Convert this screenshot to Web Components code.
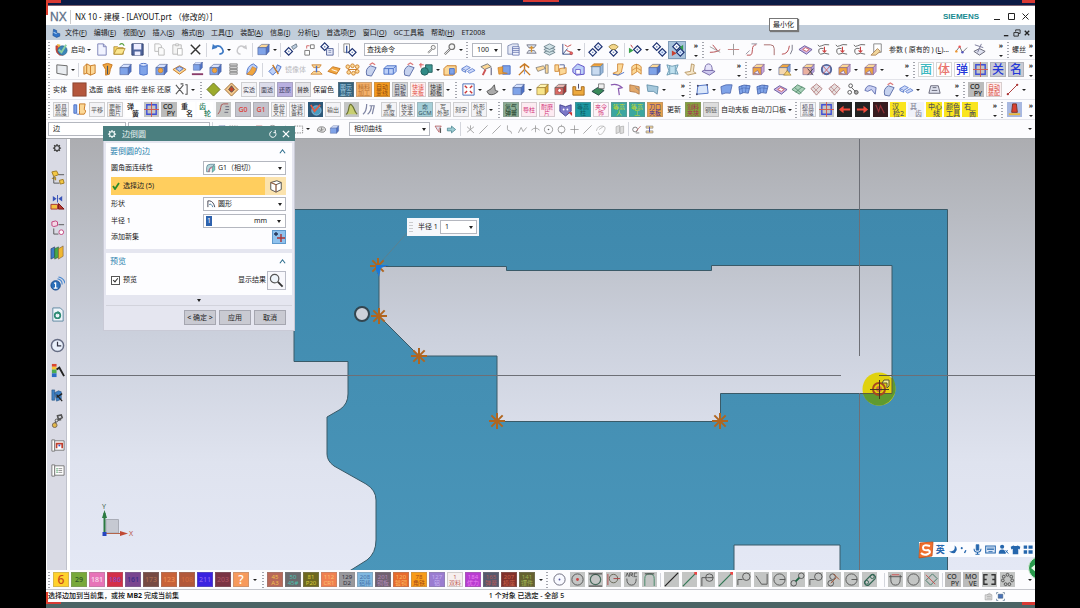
<!DOCTYPE html>
<html lang="zh-CN">
<head>
<meta charset="utf-8">
<title>NX 10 - 建模</title>
<style>
html,body{margin:0;height:100%;background:#000;overflow:hidden}
body{font:7px/10px "Noto Sans","Noto Sans CJK SC",sans-serif;color:#222;padding:0 45px 0 46px;box-sizing:border-box}
</style>
</head>
<body>
<nx-app></nx-app>
<script>
/* ---------- icon library, 16 x 16 grid ---------- */
const P=(d,f='none',s='#555',w=1)=>`<path d="${d}" fill="${f}" stroke="${s}" stroke-width="${w}"/>`;
const C=(x,y,r,f='none',s='#555',w=1)=>`<circle cx="${x}" cy="${y}" r="${r}" fill="${f}" stroke="${s}" stroke-width="${w}"/>`;
const cube=(a,b,c,s='#4a5c94')=>P('M2 6l4-3.500h8l-3 3.500z',a,s,.6)+P('M2 6h9v7.500H2z',b,s,.6)+P('M11 6l3-3.500v7.500l-3 3.500z',c,s,.6);
const sheet=(a,s='#55659a')=>P('M2 5q5-3 12-1l-2 8q-5-2-9 1z',a,s,.8)+P('M5 4l1 8M10 3l-1 8M2 8q5-3 11-1','none',s,.5);
const gem=(x,y,f='#fff')=>P(`M${x} ${y-4}l4 4-4 4-4-4z`,f,'#1d3272',1.3)+C(x,y,1,'#7c93c6','none');
const G='<rect width="16" height="16" fill="#c3c5c4"/>';
const B='#7fa3e8',BL='#bcd0f8',BD='#4d72c8',O='#f0a640',OL='#fcd897',OD='#c87a24';
const ICON={
launch:P('M2 4h4l-1 4 5 6-4 0q-4-2-4-6z','#d84a3a','#8a3030',.5)+C(9,9,5,'#3b86b8','#205a80',.6)+P('M5 8l3 3 5-8','none','#8ed0a0',2)+P('M3 2l4 1-2 3z','#f0b53c','none'),
new:P('M4 2h6l3 3v9H4z','#f1f3ff','#7d83b8')+P('M10 2v3h3','none','#7d83b8'),
open:P('M2 13V5h4l1 1h5v7z','#f7d566','#a8842c',.8)+P('M2 13l3-6h9l-3 6z','#fbe68f','#a8842c',.8)+P('M8 3q3-3 5 1','none','#58a040',1.2),
save:P('M2 2h12v12H2z','#50659c','#32426e')+'<path fill="#eef" d="M4 2h8v6H4zM5 10h6v4H5z"/>',
copy:P('M3 2h5l2 2v6H3z','#fafafa','#bbb')+P('M7 6h4l2 2v6H7z','#fafafa','#bbb'),
paste:P('M3 3h9v10H3z','#f4f4f4','#bbb')+P('M6 2h3v2H6zM8 7h5v7H8z','#fff','#bbb'),
cut:P('M3 3l10 10M13 3L3 13','none','#333',1.5),
undo:P('M3 6q7-4 10 1t-3 6','none','#3d79c4',1.8)+P('M2 8l1-6 5 4z','#3d79c4','none'),
redo:P('M13 6Q6 2 4 7t3 6','none','#c9c9cc',1.5)+P('M14 8l-1-5-4 3z','#c9c9cc','none'),
cubeo:cube(OL,B,BD),
cubeb:cube('#d6e2ff',B,BD),
cubehole:cube('#d6e2ff',B,BD)+C(7,9,2.500,O,OD,.6),
cubetop:cube(O,'#f5d8b0',B)+P('M7 14l4-5 4 5z','#f7d070','#8a6a20',.6),
cubey:cube('#fff4b0','#f8e58a','#e0a93a','#8a6a20'),
cubered:cube('#e8b6b0','#d86a64','#a83434','#555')+C(7,9,2,'#fff','#a33',.8),
cubepink:cube(OL,O,'#c9a6d8','#7a5a90')+P('M3 12l4-3 2 4z','#eef','#7a5a90',.7),
cubex:cube(OL,'#eab0a0','#b9a3e0','#6a5a90')+P('M7 7l6 7M13 7l-6 7','none','#444'),
link:gem(5,10)+P('M8 5l5-3 1 3-4 3z','#bcd','#567',.8),
rects:P('M3 9h5v5H3zM9 3h4v4H9z','#fff','#777')+P('M5 7V4h3','none','#c55',.9),
gemdoc:gem(5,5)+P('M7 7h7v7H7z','#e8ecfa','#55659a')+P('M9 9h3M9 11h3','none','#55659a',.7),
move:P('M2 2h6v9H2z','#fff','#888')+P('M5 4v8','none','#35529c',1.4)+gem(11,11),
wrench:C(10.500,5,3,'#f4f4f4','#777',1.300)+P('M8 8l-5 5','none','#777',2.400)+P('M8 8l-5 5','none','#eee',1),
layers1:P('M2 4l5-2h6v9l-5 2H2z','#e4e8f6','#6a78a4',.8)+P('M7 5h7v9H7zM7 7h7M7 9h7M7 11h7','#f4f6ff','#5a6aa8',.8),
layers2:P('M3 3h10l-2 3H5zM3 12h10l-2-3H5z','#d8e0ea','#667',.8)+P('M8 5v6M6 7l2-2 2 2','none','#d89330',1.3),
layers3:[11,8,5].map(y=>P(`M2 ${y}l6-3 6 3-6 3z`,'#cfe0e4','#58707c',.8)).join(''),
csys:P('M3 2v11h10M3 13l5-6','none','#3a4f86',1)+P('M5 3l3 2 4-2M7 9l5 2','none','#c44a4a',1)+C(12,12,1.500,'#e66','#933',.5),
gems:gem(5,11)+gem(11,5,'#e8eefc'),
key:gem(8,11)+P('M3 5q5-5 10 0l-3 3H6z','#f4d78a','#8a7430',.8),
play:P('M1 6l5 3-5 3z','#3aa34a','none')+P('M3 3l2 3','none','#b33')+gem(10,8),
gem2:gem(5,5)+gem(11,11,'#dbe9ff'),
gem3:gem(7,5)+P('M14 3v6l-4-3z','#2f9a4a','none')+P('M2 9l5 3-5 3z','#c84030','none')+gem(11,11,'#cfe4ff'),
trim:P('M2 11q8 0 11-3M5 3l5 6','none','#b5484c',1)+P('M2 5l11 6','none','#888',.8),
cross:P('M2 8h12','none','#c78080')+P('M8 2v12','none','#999'),
scurve:P('M3 14h4q2-1 2-6t4-5','none','#b5484c')+P('M8 2h6M2 13l4-4','none','#778',.8),
corner:P('M2 3h7q4 0 4 4v7','none','#a66a6a',1),
hook:P('M2 13q7 0 8-9','none','#b5484c')+P('M13 3q1 6-2 10','none','#778'),
patch:P('M1 8l6-4 8 4-6 5z','#cdb8e6','#5b4c94',.9)+P('M5 8l3-2 4 2-3 2z','#fff','#c44',.8),
swirl:P('M14 3Q9 2 6 4T2 3M14 13q-5-2-9 0-3-1-2-5 2-2 5-1','none','#666')+P('M9 5v6M7 9l2 2 2-2','none','#c44',1.2),
edit:P('M4 2h8v9H4z','#fff','#888')+P('M1 14l7-7 3 3-5 4z','#f1d69c','#a07040',.8),
pts:P('M2 10l4-5 3 6 5-5','none','#777')+C(6,5,1.300,'#e55','none')+C(9,11,1.300,'#55b','none')+C(2.500,10,1.300,'#e93','none'),
plane2:P('M2 10l6-3 6 3-6 4z','#dfe2f0','#667')+P('M3 3l9 3M10 2L6 11','none','#779'),
plane:P('M3 3l11 1v10L3 12z','#e9ecf0','#666'),
wrap:P('M2 5l3-3 4 2 5-1v9l-5 2-4-2-3 1z',OL,OD)+P('M5 2v10M9 4v10','none',OD),
rev:P('M3 3q5-3 10 0l-2 5-1 5-4 1V8z',O,OD)+P('M8 4v9','none','#456',1.2),
cyl:P('M4 3v10q4 2 8 0V3',B,BD)+`<ellipse cx="8" cy="3" rx="4" ry="1.500" fill="#dce7ff" stroke="#4d72c8"/>`,
pad:P('M1 8l7-4 7 4-7 5z',OL,OD)+P('M4 7l4-2 4 2-4 3z',BL,BD),
cubelab:'<g transform="translate(2 -2) scale(.8)">'+cube('#d6e2ff',B,BD)+'</g>'+P('M2 13h12','none','#8a3d6a',2),
thread:[2,5,8,11].map(y=>P(`M4 ${y}h8v2H4z`,'#ddd','#777',.8)).join(''),
blend:P('M3 13q0-9 7-11l4 3q-1 7-5 9z',BL,BD)+P('M3 13q4-3 6-8l4 2q-1 4-4 7z',O,OD,.6),
mirror:P('M1 10l5-5 3 5-4 4zM10 3l4 2-3 6-3-3z',BL,BD)+P('M5 3l6 10','none',OD,1.5),
offset:P('M3 3h10l-2 3H5zM2 13h12l-3-3H5z',OL,OD,.8)+P('M8 4v7','none',BD,1.5),
dots:[[3,5],[8,4],[13,5],[4,11],[9,12],[13,10]].map(p=>C(p[0],p[1],2,OL,OD,.9)).join('')+P('M3 8h10','none',OD),
sew:P('M1 10l5-5 8 2-4 6z',O,OD)+P('M5 8l6 2','none','#fff'),
bend:P('M4 14q-2-7 4-10l6 2-5 9z','#c6d2ee','#5d6ea8')+P('M7 3l3-2 3 2','none','#d77',1.2),
twocube:P('M1 7l3-3h10v6l-3 3H1z',BL,BD)+P('M1 7h10l3-3M11 7v6M6 7v6','none',BD),
unite:P('M7 3h7v8H7z','#3f9894','#26605e')+C(6,10,4,'#2f8a86','#26605e')+P('M2 1v5M0 3h5','none','#d55'),
mixcube:P('M1 7l3-3h10v7l-3 3H1z',OL,OD)+P('M7 7h5v6H7z',B,BD),
slab:P('M1 7l5-3 4 2-5 3zM7 10l5-3 3 2-6 3z','#cdd9fa',BD,.8)+P('M1 7v2l4 2V9','none',BD),
brush:P('M2 5l7-3 4 3-7 3z',OL,'#777')+P('M7 8l-3 6','none','#c55',2)+P('M13 6v8','none','#446',1),
arrowcube:P('M6 4h8v9H6z',B,BD)+P('M1 6l5-1v6l5 1-9 1z',O,OD,.7),
tri:P('M8 2v7M2 14l6-6 6 6M3 6l5-4 5 4','none',OD,1.5)+P('M8 8v5','none',B),
flag:P('M1 6l8-2 2 3-8 3zM11 3h3v9h-3z',OL,'#777',.8),
fold:P('M2 3h4v7H2zM7 7l7-1v6l-7 2z',OL,OD,.8)+P('M7 3h5v4','none','#55659a'),
shell:P('M2 7l5-5 7 3v8l-8 1-4-3z',BL,'#5b4cc4')+P('M5 8h5v5H5z','#fff','#5b4cc4',.8),
box:P('M2 5l3-3h10l-3 3z',O,OD)+P('M3 5h9v9H3z','#c9dbf0','#68a')+P('M12 5l3-3v9l-3 3z','#9ab8dc','#68a',.8),
sheet1:P('M2 12l5-2V2h6l-2 9-4 3z',OL,OD,.8)+P('M2 13l6 1 6-3','none',BD),
sheet2:P('M3 14V5q5-5 10 0v8l-4-3z',OL,OD,.8)+P('M8 2v8M3 9l5-3 5 3','none',OD,.7),
sheet3:P('M2 3q5 3 12 0l-2 5 2 5q-7-2-12 1l2-5z','#bfe0ee','#5488a4',.8)+P('M5 4v9M11 4v9','none','#5488a4',.7),
lshape:P('M9 2l3 1-1 7 3 2-9 2-3-3 6-1z','#f6e6c8','#a8844c',.8),
dome:P('M1 10l6-3 8 3-6 4z','#cdc8ee','#5b4c94',.8)+P('M4 9q0-7 4-7t4 7z','#e5e2fa','#5b4c94',.8),
gearx:C(8,8,5,'#cdd9fa','#55659a',2)+P('M4 4l8 9M12 4l-8 9','none','#c66',1),
face:P('M2 5q5-3 12-2l-2 9q-5-1-9 1z',B,'#4a62a8',.8),
mesh:sheet(B,'#3c5aa4'),meshg:P('M1 8l6-5 8 4-6 6z','#a8d0b8','#3d7a5a',.8)+P('M4 6l7 6M5 11l7-6','none','#3d7a5a',.7),
meshr:P('M2 7l6-5 6 5-6 7z','#e6dede','#a86a6a',.8)+P('M4 5l7 7M5 11l7-7','none','#a86a6a',.6),
quad:P('M3 4l10-1 1 9-12 1z','#dbe7fa','#4d72c8')+C(3,4,1,'#446','none')+C(13,3,1,'#446','none')+C(2,13,1,'#446','none'),
ribbon:P('M2 9q2-6 6-5t6 2l-1 7-4-5-4 2z','#c8cff2','#5666a8',.9),
circs:C(6,4,2)+C(5,11,2)+C(12,11,2,'#aaa')+P('M7 6l4 4','none','#555'),
car:P('M2 12l2-8h8l2 8z','#dfe2ee','#667')+P('M5 9h6M6 6h4','none','#667'),
redsq:'<rect x="1" y="1" width="14" height="14" fill="#b4563c" stroke="#8a4430"/>',
xyz:P('M2 3l8 10M10 3L2 13M12 3h2v10h-2M7 2h3','none','#555',1.1),
dia1:P('M8 1l7 7-7 7-7-7z','#9cab2c','#6a7420'),
dia2:P('M8 1l7 7-7 7-7-7z','#f4c88c','#9a6a30')+P('M8 4l3 4-3 3-3-3z','#c0482c','#555',1),
fit:P('M2 2h12v12H2z','#fff','#4a6cb4')+P('M4 4l2.500 2.500M12 4L9.500 6.500M4 12l2.500-2.500M12 12L9.500 9.500','none','#c33',1.5),
shade:P('M2 10q5-2 8-7l1 6 3 1q-5 5-10 3z','#aaa','#555'),
tray:P('M2 5h3v4h6V5h3v9H2z','#eda93e','#a56a1c')+P('M8 2v5','none','#446',1),
gcube:P('M1 10l6-4 7 3-6 5z','#3a8a5a','#244')+P('M8 2h6v5H8z','#eee','#555',.7),
stick:P('M2 3q7-2 12 3l-4 1 1 7','none','#8a5ab0',1.300),
tag:P('M3 3l10 2v8l-4-2-6-1z','#e3a86a','#a87040',.8)+P('M9 6l4 3','none','#888'),
tagb:P('M2 3l12 2-1 8-4-3-6 0z','#a5c8dc','#5685a0',.8),
line:P('M3 13L13 3','none','#a33')+C(3,13,1.200,'#a33','none')+C(13,3,1.200,'#a33','none'),
pin:P('M2 3h3v9H2zM5 13h3',B,BD)+P('M8 2h6l-1 6q3 1 0 5H8V9z',OL,OD),
target:G+P('M3 3h10v10H3z','none','#4050d8',1.5)+P('M8 0v16M0 8h16','none','#d05a50',1),
arcs:G+P('M2 13q3-3 3-7t3-4h5','none','#a55')+P('M10 5h4M10 8h4M9 11h4','none','#667'),
globe:'<rect width="16" height="16" fill="#2d5878"/>'+C(9,9,5,'#4a9cc0','#ace',.7)+P('M3 3l4 7 6-7','none','#e85a40',1.8),
wave:G+P('M2 13q2 0 3-6t3-4 3 5 3 5','#c8cf70','#687030',1.2),
force:P('M5 2q0 8-4 11M8 4h5l-2 9M10 4q0 6-4 9','none','#8086a4',1.300),
mask:P('M2 3l6 2 6-2v7l-6 5-6-5z','#7b78c8','#484590')+C(6,8,1,'#fff','none')+C(10,8,1,'#fff','none')+P('M11 11h4v4z','#c33','none'),
left:'<rect width="16" height="16" fill="#222"/>'+P('M2 8l5-4v3h7v2H7v3z','#f34a3a','none'),
right:'<rect width="16" height="16" fill="#222"/>'+P('M14 8L9 4v3H2v2h7v3z','#f34a3a','none'),
darkred:'<rect width="16" height="16" fill="#381c20"/>'+P('M3 3l3 7 2-6 4 8','none','#983038',1.2),
stamp:'<rect width="16" height="16" fill="#a8b8e0"/>'+P('M6 2h4l1 9H5z','#d84030','#803020')+P('M2 12h12v2H2z','#e8b83c','none'),
dash:'<rect x="2" y="3" width="12" height="10" fill="none" stroke="#555" stroke-dasharray="2 1.500"/>',
cloud:P('M2 10q0-6 6-6t6 5q-2 4-6 3t-6-2z','#ddd','#666')+P('M5 8l3 2 3-3M8 5v4','none','#666'),
filt:P('M3 3h9l-3 4v5l-3-4z','#dfe3f0','#a44')+P('M11 6v7','none','#444',1.4),
arr:P('M2 6h6V3l6 5-6 5v-3H2z','#9ccbd2','#3d7c88'),
sn1:P('M3 4l10 9M3 12l10-8M8 2v5','none','#888'),sn2:P('M2 14L14 2','none','#888'),
sn3:P('M5 2v5q0 3 3 3t3 4','none','#888'),sn4:P('M2 13l4-8 3 6 5-6','none','#888'),
sn5:P('M2 9q6-6 12 0M8 2v10','none','#888'),sn6:C(8,8,6,'none','#777')+C(8,8,1.200,'#666','none'),
sn7:C(8,8,5,'none','#777')+P('M8 1v3M8 12v3','none','#999'),sn8:P('M8 2v12M2 8h12','none','#888'),
sn9:P('M2 10q2-8 9-7t1 9-7 0M6 8l7-5','none','#aaa'),sn10:P('M3 4l5-2v10l-5 2zM9 4l5-1v10l-5 1z','#ddd','#aaa'),
mag2:C(6,8,3.500)+P('M8 10l6-7','none','#b55')+P('M7 13h5','none','#555'),
tbl:P('M3 3h10v3H3zM3 10h10v3H3z',OL,'#888')+P('M8 4v8','none','#55a',1.4),
c1:C(8,8,6,'#f8f9ff','#667')+C(8,8,1,'#559','none'),
c2:G+C(8,8,6,'none','#555')+C(8,8,1.500,'#c44','none'),
c3:G+C(8,8,5.500,'none','#476b5c',1.3)+P('M1 15h14M1 2h14','none','#333'),
c4:G+C(8,7,4.500,'none','#665')+P('M2 2v12M8 7h7','none','#a44'),
c5:G+P('M3 7q0 7 5 7t5-7','none','#555')+P('M2 5l1.500-4L5 5M6 5V1h3v2H7l3 2M14 1h-3v4h3','none','#444',.8),
c6:G+P('M3 15V7q0-5 5-5t5 5v8','none','#486')+P('M3 2h10','none','#333'),
l1:G+P('M1 15L15 1','none','#222',1.3),l2:G+P('M1 15L15 1','none','#375',1.3)+C(15,1,2,'#e44','none'),
l3:G+P('M2 15V6h6','none','#555')+C(10,6,4,'none','#555')+P('M8 6h6','none','#555'),
l4:G+P('M2 4l6 9M8 13h6V2','none','#555'),l5:G+C(8,8,6)+P('M8 8h6','none','#555'),
l6:G+C(4,12,3)+C(12,4,3)+P('M6 10l4-4','none','#264',2),
l7:G+C(11,5,4)+P('M2 14V8h5','none','#555'),l8:G+C(5,12,3)+C(7,5,3)+P('M8 2l6 6M5 12l6-6','none','#a53'),
l9:G+P('M3 10l7-7a3 3 0 0 1 4 4l-7 7a3 3 0 0 1-4-4z','none','#365',1.300)+C(5,11,2,'none','#365')+C(11,5,2,'none','#365'),
l10:G+P('M3 3v5q0 6 5 6t5-6V3M1 5h14','none','#555')+P('M4 3h8','none','#c44'),
l11:G+C(8,8,6),l12:G+P('M2 9l7-7 5 5-7 7z','none','#476')+P('M2 3l10 10','none','#c44',.9),
l13:G+P('M6 3H2v10h4M2 8h3M10 3h4v10h-4M11 8h3','none','#333',1.5),
l14:G+[[8,3],[12,5],[13,9],[10,13],[6,13],[3,9],[4,5]].map(p=>C(p[0],p[1],1.500,'none','#444',.9)).join(''),
gear:C(8,8,4,'none','#444',2)+[0,45,90,135].map(a=>`<path transform="rotate(${a} 8 8)" d="M8 1.500v2M8 12.500v2" stroke="#444" stroke-width="2"/>`).join(''),
s1:P('M2 2l5-1 2 4-5 2z','#f4c844','#a07a20')+P('M10 11l4-1 1 4-4 1zM2 9l4-1v3','#f4c844','#a07a20')+P('M4 7v7h6M9 5h6','none','#555'),
s2:P('M3 1l4 3-4 3zM13 1L9 4l4 3z','#3853b8','none')+P('M8 0v8','none','#3853b8')+P('M1 10h7v5H1z','#f2c042','#a33')+P('M9 9l6 6H9z','#b93a30','#711'),
s3:P('M2 2l4-1 2 1v4l-4 1-2-1z','#f4d5e4','#c0417c')+P('M4 9v6h5M9 5h6','none','#555')+C(12,13,2.500,'#fff','#c0417c'),
s4:P('M1 4l4-2v11l-4 2z','#3c7bc8','#235',.6)+P('M5 4l4-2v11l-4 2z','#49a848','#253',.6)+P('M9 4l5-3v11l-5 3z','#f0b730','#753',.6),
s5:C(6,10,5,'#2a6fba','#1a4c8c')+P('M6 7v6M4.500 8L6 7M4 13h4','none','#fff',1.3)+P('M8 3q5 1 5 6M9 1q6 1 7 7','none','#4b8ad0',1.200),
s6:P('M3 1h8l3 3v11H3z','#eef4fa','#5c87a0')+C(8,9,3,'none','#2d8a72',1.800)+P('M8 4l3 2-3 2z','#2d8a72','none'),
s7:C(8,8,6.500,'#e9f0fb','#666d84',1.600)+P('M8 4v4.500h4','none','#334',1.3),
s8:'<path fill="#d8442f" d="M2 1h5v3H2z"/><path fill="#f3c534" d="M2 4h5v3H2z"/><path fill="#4cae50" d="M2 7h5v4H2z"/><path fill="#2b6cc4" d="M2 11h5v4H2z"/>'+P('M7 7l3-2 5 9','none','#222',2),
s9:P('M2 2h3v11H2zM5 5l4-2 3 1v8l-5 2z','#3c7fc4','#25507c',.6)+P('M7 7l6 7M13 6l-6 4','none','#222',1.300),
s10:P('M4 13l3-5 5-1M8 3l4-1 1 3-4 2z','none','#555',1.700)+C(5,13,2.500,'#e2b84a','#765')+C(7,8,1.500,'#ddd','#555'),
s11:P('M2 2h3v12H2z','#fff','#777')+P('M5 3h10v10H5z','#fff','#777')+P('M7 11V6h6v5','none','#c0412f',1.8)+P('M9 8h2','none','#35c',1.8),
s12:P('M2 2h3v12H2z','#fff','#777')+P('M5 3h10v10H5z','#fff','#777')+P('M7 6h1M7 8h1M7 10h1','none','#2e8f4a',1.4)+P('M9 6h4M9 8h4M9 10h4','none','#777',.8),
app:P('M4 2l5 2v4l5 1v4l-5 2-6-3z','#2f72c8','#1d4f90')+P('M4 7l5 2','none','#bfe0fa',1.5),
blendg:P('M1 14V7q0-5 6-5h7l-4 4q-4 0-4 4v4z','#b8d8dc','#3d6a7c')+P('M10 7l4-3v7l-4 4z','#7cb','#367',.8)+P('M4 14q0-6 6-7','none','#c46',1.2),
shapeg:P('M3 13V3h3q6 1 8 10','none','#334',1.4)+P('M5 9q3-3 6 4','none','#58a',1.6)
};
const SYM=n=>`<svg viewBox="0 0 16 16" aria-hidden="true">${ICON[n]}</svg>`;

class NxBase extends HTMLElement{
  constructor(){super();this.attachShadow({mode:'open'})}
  paint(css,html){this.shadowRoot.innerHTML=`<style>*{box-sizing:border-box}svg{display:block}button,input,select{font:inherit;color:inherit;margin:0}${css}</style>${html}`}
}

customElements.define('nx-tool',class extends NxBase{
  connectedCallback(){
    const n=this.getAttribute('icon');
    this.paint(`:host{display:block;flex:none;width:var(--tool,18px)}
    button{display:flex;align-items:center;justify-content:center;width:100%;aspect-ratio:1;padding:0;border:0;background:none}
    :host([active]) button{background:#a9c3dc;border:1px solid #7f9cb8}
    svg{flex:none;width:var(--glyph,15px);height:var(--glyph,15px)}`,
    `<button type="button" aria-label="${n}">${SYM(n)}</button>`);
  }
});

/* Square text tile; "big" holds one character, "steps" offsets two lines left and right. */
customElements.define('nx-tile',class extends NxBase{
  connectedCallback(){
    this.paint(`:host{display:flex;flex:none;width:18px;justify-content:center;align-items:center}
    button{width:16px;height:15px;padding:0;border:1px solid #8885;background:var(--bg,#eef);color:var(--fg,#444);display:flex;align-items:center;justify-content:center;text-align:center;font-size:6px;line-height:6px;white-space:nowrap}
    span{display:block}
    :host([big]) button{font-size:12px;line-height:13px;font-weight:500}
    :host([num]) button{font-size:7px;line-height:13px;font-weight:500}
    :host([steps]) button{border-color:transparent;font-size:7px;line-height:7px;font-weight:500}
    :host([steps]) span{width:12px;text-align:left}
    ::slotted(i){display:block;font-style:normal;text-align:right}`,
    `<button type="button"><span><slot></slot></span></button>`);
  }
});

customElements.define('nx-menu-arrow',class extends NxBase{
  connectedCallback(){this.paint(`:host{display:flex;flex:none;width:6px;justify-content:center;align-items:center}
    i{border:2px solid transparent;border-top:2px solid #222;border-bottom:0}`,`<i></i>`)}
});

customElements.define('nx-overflow',class extends NxBase{
  connectedCallback(){this.paint(`:host{display:flex;flex:none;flex-direction:column;width:8px;height:14px;justify-content:space-between;align-items:center;font-weight:700;line-height:6px}
    i{border:2px solid transparent;border-top:2px solid #222;border-bottom:0}`,`<span>»</span><i></i>`)}
});

customElements.define('nx-label',class extends NxBase{
  connectedCallback(){this.paint(`:host{display:block;flex:none}button{display:block;border:0;background:none;padding:0 1px;white-space:nowrap}
    :host([disabled]) button{color:#b9bac0}`,`<button type="button"${this.hasAttribute('disabled')?' disabled':''}><slot></slot></button>`)}
});

customElements.define('nx-select',class extends NxBase{
  connectedCallback(){
    const ic=this.getAttribute('icon');
    this.paint(`:host{display:block;position:relative;flex:none;height:14px}
    select{appearance:none;width:100%;height:100%;border:1px solid #b4b7bf;border-radius:0;background:#fff;padding:0 10px 0 ${ic?14:4}px;outline:0}
    i{position:absolute;right:4px;top:6px;border:2px solid transparent;border-top:3px solid #222;border-bottom:0}
    svg{position:absolute;left:3px;top:2px;width:10px;height:10px}`,
    `<select aria-label="${this.getAttribute('label')}"><option>${this.getAttribute('value')}</option></select>${ic?SYM(ic):''}<i></i>`);
  }
});

/* Each toolbar is described by a short item list. */
const w='#f3f3f6',k='#555';
const BARS={
standard:`: launch l/启动 v new open save | copy paste cut | undo v redo | cubeo v | link rects gemdoc | move _6 search _2 wrench v : _2 s/比例/30/100 _2 layers1 layers2 layers3 csys v | gems key | play v gem2 *gem3 _6 » : trim cross scurve corner hook patch swirl swirl swirl edit _2 l/参数+(+原有的+)+(L)... _2 pts plane2 > » : l/螺丝 »`,
feature:`: plane v | wrap rev cubeb cyl cubehole pad cubelab cubehole thread blend | _2 mirror d/镜像体 offset sew dots bend _2 twocube bend unite v mixcube slab brush arrowcube _2 tri flag fold shell box | sheet1 sheet2 cubeo sheet3 lshape dome _18 » : cubepink v _2 cubetop v cubex gearx cubepink v _2 cubepink v > » : T/#fff/#3fb8c0/面 T/#fff/#e8746c/体 T/#fff/#2437d8/弹 target T/#c8cad4/#2437d8/关 T/#c8cad4/#2437d8/名 _2 »`,
view:`: l/实体 _2 redsq l/选面 _2 l/曲线 _2 l/组件 l/坐标 l/还原 xyz v _2 : dia1 dia2 t/${w}/#445/实透 t/#dcdcea/#445/面透 t/#b9b0e0/#335/还原 t/#e6e6ea/#222/替换 l/保留色 _2 t/#33617c/#a8d0e4/图示/显示 t/#f3b06a/#b87030/精料/加工 t/#f59a1e/#904c10/自动/变线 t/#d8dadc/#445/自动/剪板 t/#fff0f0/#e2544c/快速/夹板 t/#d8d8d8/#333/快速/模板 v _2 : fit v shade v _2 cubeb v cubey cubered tray _2 gcube stick tag tagb v _12 » : quad v face mesh mesh patch meshg meshr meshr circs ribbon bend slab v _4 car > » : S/#bbb/#222/CO/PY t/#fff0f0/#d8483c/自动/装配 line v _8`,
die:`: t/${w}/${k}/模具/高度 pin t/${w}/${k}/平移 t/${w}/${k}/更新/图片 S/#fff/#111/弹/簧 target S/#bbb/#222/CO/PY S/#fff/#111/重/名 S/#fff/#257a58/齿/轮 arcs _2 N/#c3c3cc/#dd4038/G0 N/#c3c3cc/#dd4038/G1 t/${w}/${k}/备份/文件 t/${w}/${k}/快速/备料 globe t/${w}/${k}/输出 wave force _2 t/${w}/${k}/重/高度 t/${w}/${k}/快速/文本 t/#a5cfd8/#356/命/GCM t/${w}/${k}/写/外部 t/${w}/${k}/刻字 t/${w}/${k}/外形/线 v _2 : t/#8dae96/#13331d/氮气/弹簧 t/#fdebf2/#d3387c/导柱 t/#fdebf2/#d3387c/耐磨/片 mask t/#1d9aa4/#0e5c62/等高/柱 t/#fdf3f8/#d3387c/夹令/饰 t/#3ba6a0/#cada28/等高/人 t/#3ba6a0/#cada28/等高/工 t/#e8a04c/#3d2d90/刀口/夹板 _2 l/更新 _2 t/#84a23c/#a82858/割料/夹块 t/#ddd/#666/钢链 l/自动夹板 l/自动刀口板 v : t/${w}/#556/模具/高度 target left right darkred S/#fae51e/#555/汉/检2 S/#f0f2fa/#889/其/齿 S/#fae51e/#555/中心/线 S/#fae51e/#555/颜色/工具 S/#fae51e/#555/右/面 > » : stamp _4 »`,
selection:`s/类型过滤器/78/边 _2 s/选择范围/82/ | cubeb dash cloud filt sn6 arr dash v _4 cloud cubeb _8 s/曲线规则/81/相切曲线 _2 filt arr | _2 sn1 sn2 sn2 sn3 sn4 sn5 sn6 sn7 sn8 sn2 sn9 _6 sn10 | mag2 tbl > v _2`,
material:`: T/#ffd12c/#c84a1a/6 N/#78a93a/#2e5426/29 N/#e774b8/#fae0f0/181 N/#d42f48/#8a4ac0/186 N/#7a4690/#3a2c88/161 N/#764a42/#a8684c/173 N/#c86238/#e88a50/123 N/#b2583a/#d0683c/108 N/#3a22e0/#8a60f0/211 N/#7a3444/#a85060/203 T/#f79a5c/#fff/? _2 v _2 : t/#b86858/#f0c04c/45/A3 t/#6a6a6c/#4cc0b0/50/45# t/#6e6820/#d8c83c/81/P20 t/#f08050/#f8c070/112/CR1 t/#98989c/#30303c/129/D2 t/#80b8e0/#4470a8/208/铝棒 t/#706070/#b08ab8/201/铜板 t/#e86a2c/#f8b860/120/镀铜 t/#f89c18/#a84c18/78/角铁 t/#9a7cd0/#c8b0f0/127/铝 t/#f6efee/#c06058/1/双料 t/#b83cd0/#e880f0/184/优力 t/#56586c/#b05858/165/弹簧 t/#80302c/#c86048/207/模座 t/#646030/#9cb050/141/镶件 _2 v : c1 c2 c3 c4 c5 c6 | l1 l2 l3 l2 l7 l4 l5 l6 l7 l8 l5 l9 _4 | l10 l11 l12 | S/#bbb/#333/CO/PY S/#bbb/#333/MO/VE l13 l14 > v _2`
};
customElements.define('nx-toolbar',class extends NxBase{
  item(t){
    const [k,...a]=t.split('/');
    if(t==='v')return'<nx-menu-arrow></nx-menu-arrow>';
    if(t==='|')return'<hr>';
    if(t===':')return'<b class="grip"></b>';
    if(t==='>')return'<span class="fill"></span>';
    if(t==='»')return'<nx-overflow></nx-overflow>';
    if(t[0]==='_')return`<span style="flex:none;width:${t.slice(1)}px"></span>`;
    if(k==='l'||k==='d')return`<nx-label${k==='d'?' disabled':''}>${a[0].replaceAll('+',' ').replace('(L)','(<u>L</u>)')}</nx-label>`;
    if(k==='S')return`<nx-tile steps style="--bg:${a[0]};--fg:${a[1]}">${a[2]}<i>${a[3]}</i></nx-tile>`;
    if('tTN'.includes(k))return`<nx-tile${{t:'',T:' big',N:' num'}[k]} style="--bg:${a[0]};--fg:${a[1]}">${a.slice(2).join('<br>')}</nx-tile>`;
    if(k==='s')return`<nx-select label="${a[0]}" value="${a[2]}" style="width:${a[1]}px"></nx-select>`;
    if(k==='search')return`<label class="find"><input type="text" aria-label="查找命令" value="查找命令">${SYM('wrench')}</label>`;
    return k[0]==='*'?`<nx-tool active icon="${k.slice(1)}"></nx-tool>`:`<nx-tool icon="${k}"></nx-tool>`;
  }
  connectedCallback(){
    this.paint(`:host{display:flex;flex:none;align-items:center;height:20px;background:#fcfcfe;border-bottom:1px solid #e3e4ea;overflow:hidden;padding-left:2px}
    :host([small]){--tool:13px;--glyph:11px;height:19px;border-bottom-color:#a5a8ac}
    hr{flex:none;width:1px;height:14px;margin:0 1px 0 2px;border:0;background:#d4d6dd}
    .grip{flex:none;width:2px;height:16px;margin:0 2px;background:repeating-linear-gradient(#a3a5ad 0 1px,transparent 1px 3px)}
    .grip:first-of-type{margin:0 2px 0 0}
    .fill{flex:1}.find{display:flex;flex:none;width:74px;height:13px;border:1px solid #b4b7bf;background:#fff}
    .find input{flex:1;min-width:0;border:0;padding:0 2px;background:none}.find svg{width:11px;height:11px}`,
    BARS[this.getAttribute('name')].trim().split(/\s+/).map(t=>this.item(t)).join(''));
  }
});

customElements.define('nx-titlebar',class extends NxBase{
  connectedCallback(){
    this.paint(`:host{display:flex;flex:none;height:20px;align-items:center;background:#fff;border-top:1px solid #7d6470;padding:2px 3px 0 4px}
    strong{font:12px/14px "Liberation Sans",sans-serif;color:#5d7088;border-right:1px solid #ccc;width:21px;flex:none;-webkit-text-stroke:.3px}
    h1{font:inherit;font-size:8px;margin:0 0 0 4px;flex:1;white-space:pre;color:#111}
    em{font:700 8px/10px "Liberation Sans",sans-serif;color:#168a90;margin-right:11px}
    button{border:0;background:none;padding:0;width:14px;height:14px}svg{width:9px;height:9px;margin:auto}`,
    `<strong>NX</strong><h1>NX 10 - 建模 - [LAYOUT.prt （修改的）]</h1><em>SIEMENS</em>
    <button aria-label="最小化"><svg viewBox="0 0 9 9">${P('M1 7.500h6','none','#222')}</svg></button>
    <button aria-label="最大化"><svg viewBox="0 0 9 9">${P('M1.500 1.500h6v6h-6z','none','#222')}</svg></button>
    <button aria-label="关闭"><svg viewBox="0 0 9 9">${P('M1.500 1.500l6 6M7.500 1.500l-6 6','none','#222')}</svg></button>`);
  }
});

customElements.define('nx-menubar',class extends NxBase{
  connectedCallback(){
    const m='文件(F) 编辑(E) 视图(V) 插入(S) 格式(R) 工具(T) 装配(A) 信息(I) 分析(L) 首选项(P) 窗口(O) GC工具箱 帮助(H) ET2008'.split(' ');
    this.paint(`:host{display:flex;flex:none;height:15px;align-items:center;background:#c2cedb;padding:0 3px 0 5px}
    nav{display:flex;flex:1;gap:7px;margin-left:4px}a{color:#222;text-decoration:none;white-space:nowrap}
    .app{width:10px;height:10px}
    button{border:0;background:none;padding:0;width:10px;height:12px}button svg{width:8px;height:8px;margin:auto}`,
    `<svg class="app" viewBox="0 0 16 16">${ICON.app}</svg><nav>${m.map(t=>`<a href="#">${t.replace(/\((.)\)/,'(<u>$1</u>)')}</a>`).join('')}</nav>
    <button aria-label="最小化"><svg viewBox="0 0 9 9">${P('M1 7.500h5','none','#222',1.5)}</svg></button>
    <button aria-label="还原"><svg viewBox="0 0 9 9">${P('M3 3V1h5v4H6M1 4h5v4H1z','none','#222')}</svg></button>
    <button aria-label="关闭"><svg viewBox="0 0 9 9">${P('M2 2l5 5M7 2l-5 5','none','#222',1.5)}</svg></button>`);
  }
});

customElements.define('nx-resource-bar',class extends NxBase{
  connectedCallback(){
    const t=['gear','s1','s2','s3','s4','s5','s6','s7','s8','s9','s10','s11','s12'];
    this.paint(`:host{display:flex;flex:none;flex-direction:column;width:20px;background:#d9dae4;border-right:1px solid #c0c2cc;padding:0 1px;gap:7px}
    nx-tool:first-of-type{--glyph:10px;margin-bottom:4px}
    .gap{margin-bottom:6px}`,
    t.map((n,i)=>`<nx-tool icon="${n}"${i>3&&i<7?' class="gap"':''}></nx-tool>`).join(''));
  }
});

customElements.define('nx-viewport',class extends NxBase{
  connectedCallback(){
    const star=(x,y)=>`<g transform="translate(${x} ${y})" stroke="#b0651f" stroke-width="2">${[0,45,90,135].map(a=>`<path transform="rotate(${a})" d="M-8 0H8"/>`).join('')}</g>`;
    this.paint(`:host{display:block;flex:1;min-width:0;position:relative;overflow:hidden;background:linear-gradient(#acadb1,#b8bbc2 18%,#cbd0dc 45%,#dfe3ef 75%,#e4e8f5)}
    :host>svg{position:absolute;inset:0;width:100%;height:100%}
    text{font:7px "Noto Sans",sans-serif}`,
    `<svg viewBox="70 139 965 431" preserveAspectRatio="xMinYMin slice" fill="none">
    <defs><linearGradient id="part" x1="0" y1="0" x2="0" y2="1"><stop offset="0" stop-color="#3f89ad"/><stop offset="1" stop-color="#4a96ba"/></linearGradient></defs>
    <path fill="url(#part)" fill-rule="evenodd" stroke="#3a5a68" d="M294 209.500H947.500V580H335L351 570L367 560Q376 553 376 540V500Q376 490 366 484L334 466Q327 461 327 454V417L340 409.500Q348 404 348 394V361.500H294Z M379 267.500V316L419 356H497V421.500H720.500V393.500H892V265.500H711.500V270.500H506.500V266.500H380Z M734 545H840V580H734Z"/>
    <path stroke="#6d6f76" d="M70 375.500H841M879 375.500H1035M859.500 139V356M859.500 393V570"/>
    <path stroke="#5b8190" d="M381 262L407 233"/>
    ${star(378,266)}${star(379,316)}${star(419,356)}${star(497,421)}${star(720,421)}
    <path fill="#1b78d8" d="M376 265h13l-8 3-2 9-3-7z"/>
    <circle cx="362" cy="314" r="7" fill="#cdd1da" stroke="#33454f" stroke-width="2"/>
    <circle cx="879" cy="389" r="16.500" fill="#e0d20e"/><path fill="#5f9a30" d="M862.700 393.500H892V376.500Q897 384 895 393Q890 405 879 405.500Q867 405 862.700 393.500Z"/>
    <path stroke="#5c5a40" d="M862 393.500H892V378M879 375.500H892"/>
    <circle cx="879" cy="389" r="6" stroke="#a84820" stroke-width="2"/><circle cx="879" cy="389" r="3" fill="#d06a3c"/><path stroke="#443820" d="M870 389.500H889M879.500 380V399"/><path stroke="#5a5230" fill="#f4ec98" d="M882 383l2-3h5v6l-2 2v-5z"/>
    <path fill="#c6c9d2" stroke="#a9acb6" d="M106 519.500h12.500V533H106z"/><path stroke="#2c7a42" d="M104.500 533v-20" stroke-width="2"/><path fill="#2c7a42" d="M102 518l2.500-8 2.500 8z"/><path stroke="#b4644a" d="M105 533.500h16"/><path fill="#c04a34" d="M120 531l8 2.500-8 2.500z"/><rect x="102.500" y="532" width="4" height="4" fill="#2546c0"/>
    <text x="102" y="509" fill="#48664e">Y</text><text x="129" y="536" fill="#b85444">X</text>
    </svg><slot></slot>`);
  }
});

customElements.define('nx-float-field',class extends NxBase{
  connectedCallback(){
    this.paint(`:host{position:absolute;left:337px;top:79px;display:flex;align-items:center;width:72px;height:18px;background:#f5f7fb;padding:0 2px;color:#222}
    .grip{width:4px;height:13px;margin-right:5px;background:radial-gradient(#999 30%,transparent 40%) 0 0/2px 3px}
    label{flex:1;white-space:nowrap}nx-select{width:37px}`,
    `<span class="grip"></span><label>半径 1</label><nx-select label="半径 1" value="1"></nx-select>`);
  }
});

customElements.define('nx-group',class extends NxBase{
  connectedCallback(){
    this.paint(`:host{display:block;background:#fdfdff;padding:0 6px 4px 5px}
    h3{display:flex;justify-content:space-between;align-items:center;margin:0 0 0 -1px;font:inherit;font-size:8px;line-height:16px;color:#2c82ae}
    svg{width:7px;height:7px}`,
    `<h3>${this.getAttribute('title-text')}<svg viewBox="0 0 8 8">${P('M1 6l3-4 3 4','none','#2a6c8c',1.2)}</svg></h3><slot></slot>`);
  }
});

customElements.define('nx-dialog',class extends NxBase{
  connectedCallback(){
    this.paint(`:host{display:block;position:absolute;left:57px;top:126px;width:192px;background:#e5e6f0;border:1px solid #c9cad6;border-top:0;color:#222;z-index:2}
    header{display:flex;align-items:center;height:15px;background:#4b7f80;color:#e8f2f2;margin:0 -1px;padding:0 5px 0 4px;gap:5px;font-size:8px}
    header svg{width:10px;height:10px}h2{font:inherit;margin:0;flex:1}header button{border:0;background:none;padding:0;width:8px}header button svg{width:8px;height:8px}
    main{display:flex;flex-direction:column;gap:4px;padding:2px 2px 0}
    .row{display:flex;align-items:center;justify-content:space-between;height:18px}.low{height:16px}
    nx-select{width:83px}
    .pick{background:#fbe3ae;gap:1px}.pick span{display:flex;align-items:center;gap:3px;flex:1;height:18px;background:#ffce5e;padding-left:1px}.pick svg{width:8px;height:8px}
    .pick button{width:20px;height:18px;border:0;background:none;padding:2px 3px}.pick button svg{width:14px;height:14px}
    .num{display:flex;align-items:center;width:83px;height:14px;border:1px solid #b4b7bf;background:#fff;gap:10px;padding:0 4px 0 2px}
    .num input{flex:1;min-width:0;border:0;padding:0 1px;height:10px;background:linear-gradient(#2d62ad,#2d62ad) 0 0/6px 10px no-repeat;color:#fff}
    .num i,.more{border:2px solid transparent;border-top:3px solid #222;border-bottom:0}
    .add{width:14px;height:14px;border:1px solid #5f9acd;background:#8fc2ee;padding:0}.add svg{width:12px;height:12px}
    .tick{display:flex;align-items:center;gap:3px}.tick input{appearance:none;width:9px;height:9px;border:1px solid #555;margin:0;background:#fff;position:relative}
    .tick input:checked::after{content:"";position:absolute;left:2px;top:0;width:2px;height:4px;border:solid #333;border-width:0 1px 1px 0;transform:rotate(40deg)}
    .show{display:flex;align-items:center;gap:1px}.show button{width:19px;height:19px;border:1px solid #b9bbc6;background:#f8f8fc;padding:1px}.show svg{width:15px;height:15px}
    .tall{height:22px}nx-group.b{margin-bottom:4px}
    .more{display:block;width:0;margin:0 auto 3px}
    footer{display:flex;justify-content:flex-end;gap:3px;border-top:1px solid #d2d3dc;padding:4px 6px 5px;margin:0 2px}
    footer button{width:32px;height:15px;border:1px solid #a5a6b0;background:#c9cad2;padding:0;color:#222;white-space:nowrap}`,
    `<header><svg viewBox="0 0 16 16">${ICON.gear.replaceAll('#444','#e8f2f2')}</svg><h2>边倒圆</h2>
      <button aria-label="重置"><svg viewBox="0 0 9 9">${P('M3 1.500a3.500 3.500 0 1 0 4 1M7 0v3H5','none','#fff',1.1)}</svg></button>
      <button aria-label="关闭"><svg viewBox="0 0 9 9">${P('M1 1l7 7M8 1L1 8','none','#fff',1.5)}</svg></button></header>
    <main><nx-group title-text="要倒圆的边">
      <div class="row"><span>圆角面连续性</span><nx-select icon="blendg" label="圆角面连续性" value="G1（相切）"></nx-select></div>
      <div class="row pick"><span><svg viewBox="0 0 8 8">${P('M1 4l2 3 4-6','none','#2a8a2c',1.8)}</svg>选择边 (5)</span><button aria-label="选择边"><svg viewBox="0 0 16 16">${P('M2 4l7-2 5 2v8l-6 3-6-3z','#fff','#444')+P('M2 4l6 2.500 6-2.500M8 6.500V15','none','#444')+P('M2 4l6 2.500V15','none','#b63',.8)}</svg></button></div>
      <div class="row"><span>形状</span><nx-select icon="shapeg" label="形状" value="圆形"></nx-select></div>
      <div class="row low"><label for="r">半径 1</label><div class="num"><input id="r" type="text" value="1"><span>mm</span><i></i></div></div>
      <div class="row low"><span>添加新集</span><button class="add" aria-label="添加新集"><svg viewBox="0 0 12 12">${P('M8 3v8M4 7h8','none','#a33',1.4)+P('M3 1v4M1 3h4','none','#235',1.3)}</svg></button></div>
    </nx-group>
    <nx-group class="b" title-text="预览"><div class="row tall"><label class="tick"><input type="checkbox" checked>预览</label>
      <div class="show"><span>显示结果</span><button aria-label="显示结果"><svg viewBox="0 0 16 16">${C(6,6,4.500,'#eef4fa','#555',1.300)+P('M9.500 9.500l5 5','none','#333',2)}</svg></button></div></div></nx-group></main>
    <i class="more"></i>
    <footer><button>&lt; 确定 &gt;</button><button>应用</button><button>取消</button></footer>`);
  }
});

customElements.define('nx-ime',class extends NxBase{
  connectedCallback(){
    const f='#2566ad';
    const g=[['月亮',P('M11 2q2 9-8 9 8 6 11-2 1-5-3-7z',f,'none')],['标点',C(4,6,1.500,f,'none')+P('M10 9l-2 4','none',f,2)],['语音',P('M6 1h4v8H6z',f,f)+P('M3 7q0 5 5 5t5-5M8 12v3M5 15h6','none',f,1.5)],['键盘',P('M1 3h14v10H1z','#dce8f8',f,1.5)+P('M3 6h10M3 8h10M5 11h6','none',f,1.2)],['用户',C(6,4,3,f,'none')+P('M1 14q0-6 5-6t5 6z',f,'none')+P('M10 14l4-5M11 9l4 5','none',f,1.3)],['皮肤',P('M1 4l4-2q3 2 6 0l4 2-1 4-2-1v8H4V7L2 8z',f,'none')],['工具',P('M1 2h5v5H1zM8 2h6v5H8zM1 9h5v5H1zM8 9h6v5H8z',f,'none')]];
    this.paint(`:host{position:absolute;right:0;bottom:13px;display:flex;align-items:center;width:116px;height:15px;background:#fbfcff;z-index:1}
    div{display:flex;justify-content:space-around;align-items:center;flex:1}div button{border:0;background:none;padding:0}svg{width:11px;height:11px}
    .lang{font-size:9px;font-weight:700;color:#2566ad;line-height:11px}
    .logo{width:18px;height:18px;flex:none;margin-left:-2px}`,
    `<svg class="logo" viewBox="0 0 18 18">${P('M3 2l13-1-1 14-13 2z','#ef6e2c','#c24f18',.8)+P('M13 5Q6 3 6 6.500t5 2.500q4 2 0 4t-7-1','none','#fff',2)}</svg><div><button class="lang">英</button>${g.map(([n,s])=>`<button aria-label="${n}"><svg viewBox="0 0 16 16">${s}</svg></button>`).join('')}</div>`);
  }
});

customElements.define('nx-status',class extends NxBase{
  connectedCallback(){
    this.paint(`:host{display:grid;flex:none;grid-template-columns:1fr auto 1fr;align-items:center;height:12px;background:#fdfdfe;padding:0 30px 0 2px;font-weight:500;color:#111}
    .r{display:flex;justify-content:flex-end;gap:3px}svg{width:9px;height:9px}`,
    `<span>选择边加到当前集，或按 <b>MB2</b> 完成当前集</span><span>1 个对象 已选定 - 全部 5</span><span class="r"><svg viewBox="0 0 16 16">${P('M2 5h12v9H2zM5 5l5-3 3 3M5 8h7M5 11h7','#ddd','#999')}</svg><svg viewBox="0 0 16 16">${P('M4 4h8v7H4z','#4a72b8','#357')+P('M1 4V1h3M12 1h3v3M15 12v3h-3M4 15H1v-3','none','#357')}</svg></span>`);
  }
});

customElements.define('nx-app',class extends NxBase{
  connectedCallback(){
    this.paint(`:host{display:flex;flex-direction:column;height:100vh;position:relative;overflow:hidden}
    .edge{flex:none;height:5px;background:linear-gradient(90deg,transparent calc(50% - 17px),#d83a34 0 calc(50% + 19px),transparent 0) 0 0/100% 2px no-repeat,linear-gradient(#d83a34,#d83a34) 100% 0/13px 3px no-repeat,linear-gradient(#d83a34,#d83a34) 0 0/15px 3px no-repeat,#0c1b45}
    .foot{height:6px;background:linear-gradient(#d83a34,#d83a34) 100% 0/13px 3px no-repeat,linear-gradient(#d83a34,#d83a34) 0 0/15px 2px no-repeat,#4b6465}
    .work{display:flex;flex:1;min-height:0;position:relative;background:#fff;gap:3px;padding-left:1px}
    .tip{position:absolute;right:237px;top:18px;height:13px;padding:0 3px;border:1px solid #777;background:#fff;line-height:11px;box-shadow:1px 1px 1px #777}
    .bubble{position:absolute;right:-17px;bottom:28px;width:24px;height:24px;border-radius:50%;background:#299a4c;border:1px solid #dff0e2;padding:0;z-index:3}
    .bubble svg{width:22px;height:22px}
    .corner{position:absolute;left:0;width:2px;background:#e0402f}.a{top:0;height:15px}.z{bottom:4px;height:12px}
    .bottom{border-bottom-color:#c4c6cc}`,
    `<div class="edge"></div><nx-titlebar></nx-titlebar><nx-menubar></nx-menubar>
    <nx-toolbar name="standard"></nx-toolbar><nx-toolbar name="feature"></nx-toolbar><nx-toolbar name="view"></nx-toolbar><nx-toolbar name="die"></nx-toolbar><nx-toolbar name="selection" small></nx-toolbar>
    <div class="work"><nx-resource-bar></nx-resource-bar><nx-viewport><nx-float-field></nx-float-field></nx-viewport><nx-ime></nx-ime></div>
    <nx-toolbar class="bottom" name="material"></nx-toolbar><nx-status></nx-status><div class="edge foot"></div>
    <nx-dialog></nx-dialog><div class="tip" role="tooltip">最小化</div><button class="bubble" aria-label="展开"><svg viewBox="0 0 22 22">${P('M2 11l5-4v3h8v2H7v3z','#e8fbe8','none')}</svg></button><i class="corner a"></i><i class="corner z"></i>`);
  }
});
</script>
</body>
</html>
